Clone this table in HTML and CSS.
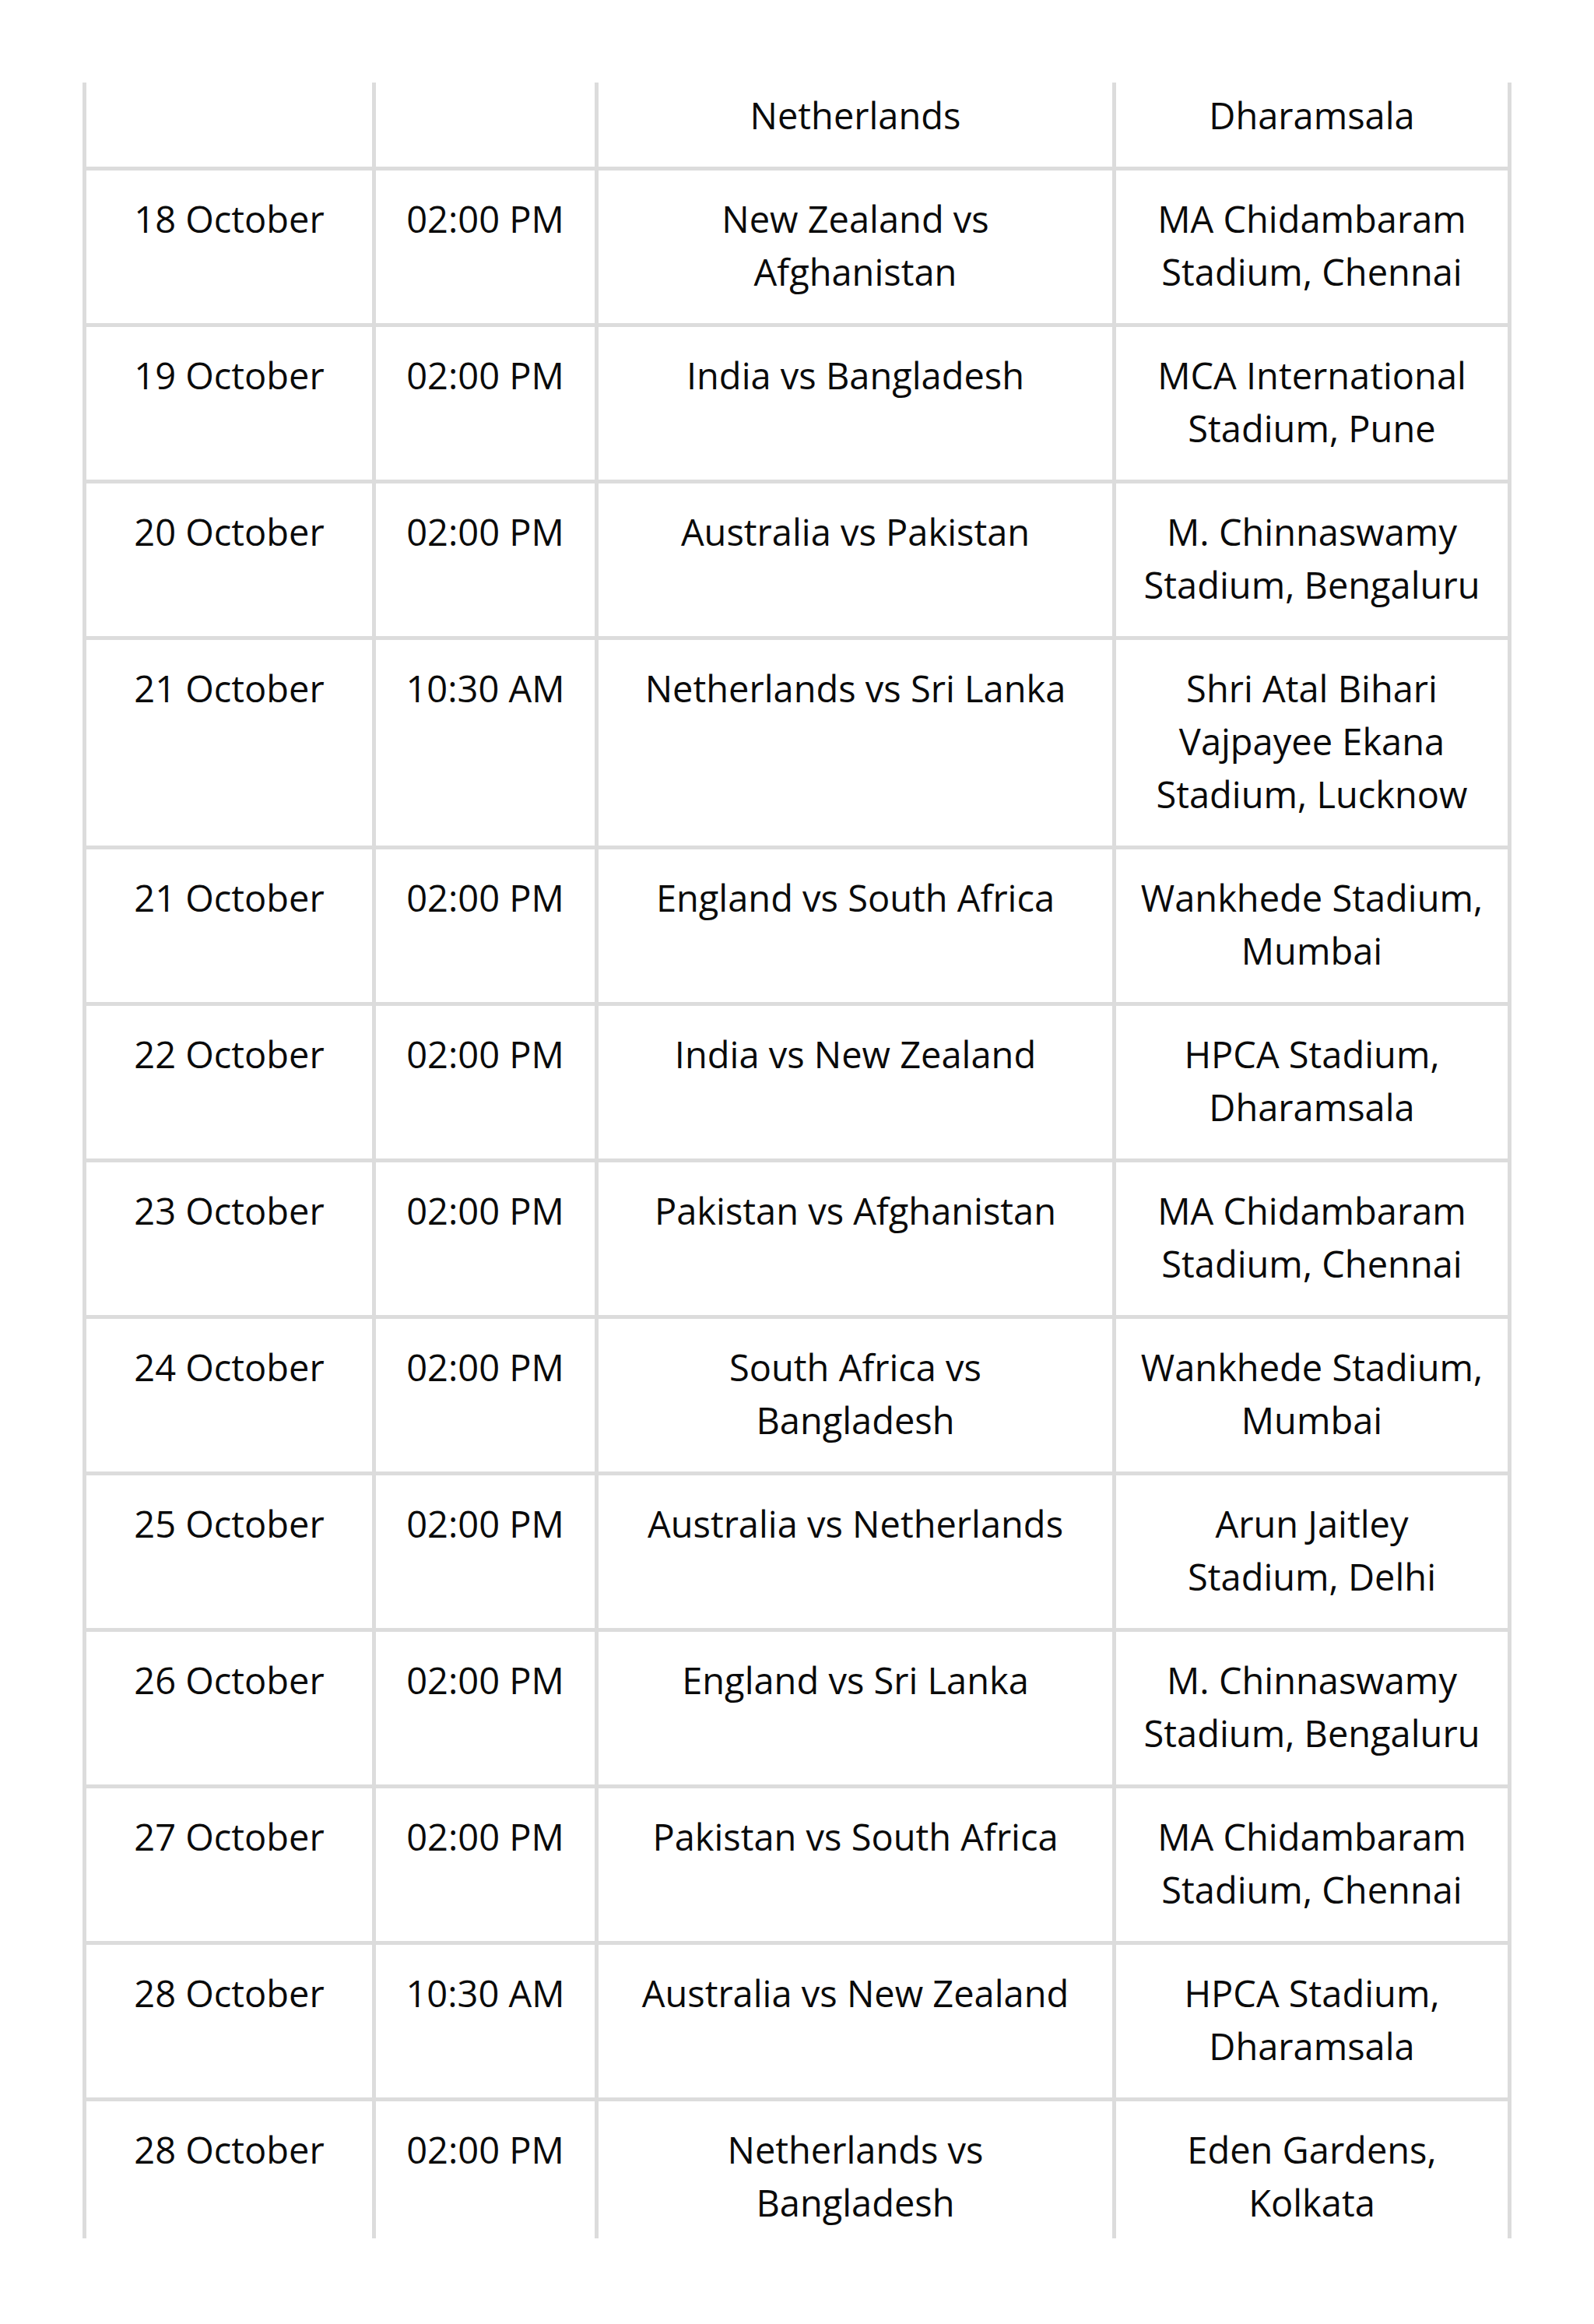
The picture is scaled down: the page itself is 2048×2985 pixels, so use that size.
FILE: index.html
```html
<!DOCTYPE html>
<html lang="en">
<head>
<meta charset="utf-8">
<title>World Cup 2023 Schedule</title>
<link rel="stylesheet" href="styles.css">
</head>
<body>
<main class="page">
  <table class="schedule">
    <tbody>
      <tr class="row-partial">
        <td class="c1"></td>
        <td class="c2"></td>
        <td class="c3">Netherlands</td>
        <td class="c4">Dharamsala</td>
      </tr>
      <tr>
        <td class="c1">18 October</td>
        <td class="c2">02:00 PM</td>
        <td class="c3">New Zealand vs Afghanistan</td>
        <td class="c4">MA Chidambaram Stadium, Chennai</td>
      </tr>
      <tr>
        <td class="c1">19 October</td>
        <td class="c2">02:00 PM</td>
        <td class="c3">India vs Bangladesh</td>
        <td class="c4">MCA International Stadium, Pune</td>
      </tr>
      <tr>
        <td class="c1">20 October</td>
        <td class="c2">02:00 PM</td>
        <td class="c3">Australia vs Pakistan</td>
        <td class="c4">M. Chinnaswamy Stadium, Bengaluru</td>
      </tr>
      <tr>
        <td class="c1">21 October</td>
        <td class="c2">10:30 AM</td>
        <td class="c3">Netherlands vs Sri Lanka</td>
        <td class="c4">Shri Atal Bihari Vajpayee Ekana Stadium, Lucknow</td>
      </tr>
      <tr>
        <td class="c1">21 October</td>
        <td class="c2">02:00 PM</td>
        <td class="c3">England vs South Africa</td>
        <td class="c4">Wankhede Stadium, Mumbai</td>
      </tr>
      <tr>
        <td class="c1">22 October</td>
        <td class="c2">02:00 PM</td>
        <td class="c3">India vs New Zealand</td>
        <td class="c4">HPCA Stadium, Dharamsala</td>
      </tr>
      <tr>
        <td class="c1">23 October</td>
        <td class="c2">02:00 PM</td>
        <td class="c3">Pakistan vs Afghanistan</td>
        <td class="c4">MA Chidambaram Stadium, Chennai</td>
      </tr>
      <tr>
        <td class="c1">24 October</td>
        <td class="c2">02:00 PM</td>
        <td class="c3">South Africa vs Bangladesh</td>
        <td class="c4">Wankhede Stadium, Mumbai</td>
      </tr>
      <tr>
        <td class="c1">25 October</td>
        <td class="c2">02:00 PM</td>
        <td class="c3">Australia vs Netherlands</td>
        <td class="c4">Arun Jaitley Stadium, Delhi</td>
      </tr>
      <tr>
        <td class="c1">26 October</td>
        <td class="c2">02:00 PM</td>
        <td class="c3">England vs Sri Lanka</td>
        <td class="c4">M. Chinnaswamy Stadium, Bengaluru</td>
      </tr>
      <tr>
        <td class="c1">27 October</td>
        <td class="c2">02:00 PM</td>
        <td class="c3">Pakistan vs South Africa</td>
        <td class="c4">MA Chidambaram Stadium, Chennai</td>
      </tr>
      <tr>
        <td class="c1">28 October</td>
        <td class="c2">10:30 AM</td>
        <td class="c3">Australia vs New Zealand</td>
        <td class="c4">HPCA Stadium, Dharamsala</td>
      </tr>
      <tr class="row-last">
        <td class="c1">28 October</td>
        <td class="c2">02:00 PM</td>
        <td class="c3">Netherlands vs Bangladesh</td>
        <td class="c4">Eden Gardens, Kolkata</td>
      </tr>
    </tbody>
  </table>
</main>
</body>
</html>
```
FILE: styles.css
```css
html, body {
  margin: 0;
  padding: 0;
  background: #ffffff;
}

.page {
  padding: 106px 0 0 106px;
}

.schedule {
  border-collapse: separate;
  border-spacing: 0;
  table-layout: fixed;
  width: 1836px;
  font-family: "Open Sans", "Noto Sans", sans-serif;
  font-size: 47px;
  line-height: 68px;
  color: #0a0a0a;
}

.schedule td {
  box-sizing: border-box;
  vertical-align: top;
  text-align: center;
  padding: 28px 16px 32px;
  border-right: 5px solid #dcdcdc;
  border-bottom: 5px solid #dcdcdc;
}

.schedule td.c1 {
  width: 377px;
  border-left: 5px solid #dcdcdc;
}

.schedule td.c2 {
  width: 286px;
}

.schedule td.c3 {
  width: 665px;
  padding-left: 46px;
  padding-right: 46px;
}

.schedule td.c4 {
  width: 508px;
  padding-left: 30px;
  padding-right: 30px;
}

.row-partial td {
  padding-top: 8px;
}

.row-last td {
  padding-bottom: 12px;
  border-bottom: none;
}
```
